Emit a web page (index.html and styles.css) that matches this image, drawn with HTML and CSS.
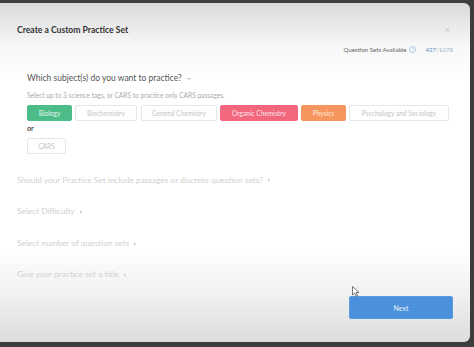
FILE: index.html
```html
<!DOCTYPE html>
<html lang="en">
<head>
  <meta charset="UTF-8">
  <meta name="viewport" content="width=device-width, initial-scale=1.0">
  <title>Create a Custom Practice Set</title>
  <link rel="stylesheet" href="styles.css">
</head>
<body>
  <div class="modal">
    <div class="modal-header">
      <h2>Create a Custom Practice Set</h2>
      <span class="close">&times;</span>
    </div>

    <div class="available">
      <span>Question Sets Available</span>
      <span class="help">?</span>
      <span class="count"><b>427</b>/1078</span>
    </div>

    <!-- Subjects -->
    <div class="subjects">
      <h3>Which subject(s) do you want to practice? <span class="caret"></span></h3>
      <p class="hint">Select up to 3 science tags, or CARS to practice only CARS passages.</p>
      <div class="tags">
        <button class="tag biology">Biology</button>
        <button class="tag biochem">Biochemistry</button>
        <button class="tag genchem">General Chemistry</button>
        <button class="tag organic">Organic Chemistry</button>
        <button class="tag physics">Physics</button>
        <button class="tag psych">Psychology and Sociology</button>
      </div>
      <div class="or">or</div>
      <button class="tag cars">CARS</button>
    </div>

    <!-- Collapsed steps -->
    <div class="step">Should your Practice Set include passages or discrete question sets? <span class="arrow"></span></div>
    <div class="step">Select Difficulty <span class="arrow"></span></div>
    <div class="step">Select number of question sets <span class="arrow"></span></div>
    <div class="step">Give your practice set a title <span class="arrow"></span></div>

    <div class="footer">
      <span class="cursor">
        <svg width="8" height="11" viewBox="0 0 8 11"><path d="M0.5 0.5 L0.5 9 L2.6 7 L4.2 10.4 L5.6 9.8 L4 6.5 L7 6.5 Z" fill="#fff" stroke="#555" stroke-width="0.8"/></svg>
      </span>
      <button class="next">Next</button>
    </div>
  </div>
</body>
</html>
```

FILE: styles.css
```css
body {
  margin: 0;
  background-color: #3d3d3d;
  font-family: Lato, "Open Sans", sans-serif;
}

.modal {
  width: 470px;
  height: 339px;
  margin-top: 3px;
  border-radius: 0 6px 6px 0;
  background: linear-gradient(to bottom, #d9d9d9 0%, #f6f6f6 12%, #fff 22%, #fff 72%, #f1f1f1 86%, #dcdcdc 100%);
  display: flex;
  flex-direction: column;
  box-sizing: border-box;
}

.modal-header {
  display: flex;
  justify-content: space-between;
  align-items: center;
  padding: 19px 20px 0 17px;
  height: 15px;
}

.modal-header h2 {
  margin: 0;
  font-size: 8.6px;
  font-weight: bold;
  color: #333;
}

.close {
  color: #c8c8c8;
  font-size: 9px;
}

.available {
  display: flex;
  justify-content: flex-end;
  align-items: center;
  padding: 7px 17px 0 0;
  font-size: 6.1px;
  color: #666;
  height: 10px;
}

.help {
  width: 5px;
  height: 5px;
  margin: 0 9px 0 3px;
  border: 1px solid #a9c8e8;
  border-radius: 50%;
  font-size: 4px;
  color: #a9c8e8;
  display: inline-flex;
  align-items: center;
  justify-content: center;
}

.count {
  color: #9fb9d4;
}

.count b {
  color: #5b8fc7;
  font-weight: normal;
}

.subjects {
  padding: 17px 0 0 27px;
}

.subjects h3 {
  margin: 0;
  font-size: 8.5px;
  font-weight: normal;
  color: #555;
  line-height: 14px;
}

.caret {
  display: inline-block;
  margin-left: 3px;
  vertical-align: middle;
  border-left: 2px solid transparent;
  border-right: 2px solid transparent;
  border-top: 2px solid #c4c4c4;
}

.hint {
  margin: 6px 0 0;
  font-size: 6.6px;
  color: #aaa;
  line-height: 9px;
}

.tags {
  display: flex;
  gap: 3px;
  margin-top: 5px;
}

.tag {
  height: 16px;
  padding: 0;
  font-family: inherit;
  font-size: 6.6px;
  color: #c4c4c4;
  background-color: #fff;
  border: 1px solid #e6e6e6;
  border-radius: 2px;
}

.biology {
  width: 45px;
  background-color: #4cbc88;
  border-color: #4cbc88;
  color: #e6f7ef;
}

.biochem {
  width: 62px;
}

.genchem {
  width: 76px;
  margin-left: 1px;
}

.organic {
  width: 78px;
  background-color: #f2677e;
  border-color: #f2677e;
  color: #fde4e8;
}

.physics {
  width: 45px;
  background-color: #f7955e;
  border-color: #f7955e;
  color: #fde9dd;
}

.psych {
  width: 100px;
}

.or {
  font-size: 7px;
  font-weight: bold;
  color: #444;
  margin-top: 3px;
  line-height: 9px;
}

.cars {
  margin-top: 4px;
  width: 39px;
}

.step {
  padding-left: 17px;
  font-size: 8.3px;
  color: #d0d0d0;
  line-height: 12px;
  margin-top: 19.6px;
}

.step:first-of-type {
  margin-top: 21px;
}

.arrow {
  display: inline-block;
  margin-left: 3px;
  vertical-align: middle;
  border-top: 2px solid transparent;
  border-bottom: 2px solid transparent;
  border-left: 2px solid #d0d0d0;
}

.footer {
  position: relative;
  display: flex;
  justify-content: flex-end;
  padding: 16px 17px 0 0;
}

.cursor {
  position: absolute;
  left: 352px;
  top: 1px;
}

.next {
  width: 104px;
  height: 23px;
  background-color: #4a90db;
  border: 1px solid #5c9be0;
  border-radius: 2px;
  color: #e8f1fb;
  font-family: inherit;
  font-size: 7px;
}
```
